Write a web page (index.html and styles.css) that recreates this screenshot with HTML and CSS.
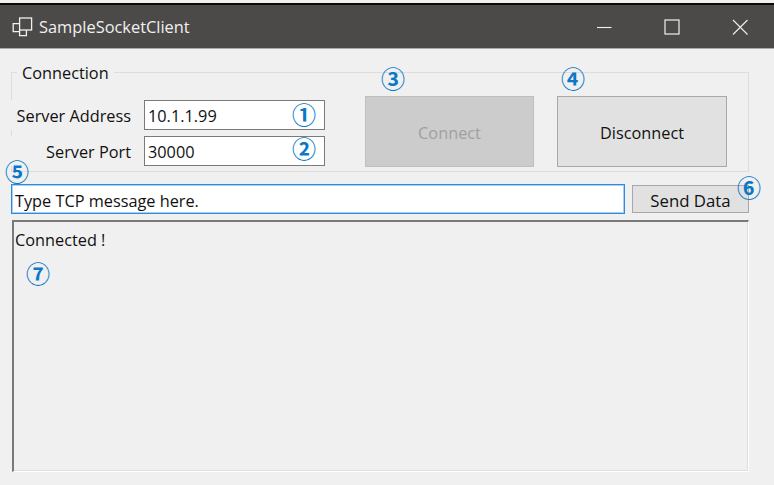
FILE: index.html
```html
<!doctype html>
<html lang="en">
<head>
  <meta charset="utf-8">
  <title>SampleSocketClient</title>
  <link rel="stylesheet" href="styles.css">
</head>
<body>
<div class="window">
  <div class="titlebar">
    <svg class="app-icon" width="21" height="20" viewBox="0 0 21 20" fill="none" stroke="#f0f0f0" stroke-width="1.3">
      <rect x="7.6" y="1" width="12" height="12"/>
      <path d="M7.6 6.600H1.200V14.600H7.600M7.600 13V18.600H14.400V13"/>
    </svg>
    <span class="title">SampleSocketClient</span>
    <div class="controls">
      <svg width="16" height="16" viewBox="0 0 16 16" stroke="#f0f0f0" stroke-width="1.1"><path d="M1 8.500H15.500"/></svg>
      <svg width="16" height="16" viewBox="0 0 16 16" fill="none" stroke="#f0f0f0" stroke-width="1.2"><rect x="1" y="1" width="14" height="14"/></svg>
      <svg width="16" height="16" viewBox="0 0 16 16" stroke="#f0f0f0" stroke-width="1.1"><path d="M1 1L15.500 15.500M15.500 1L1 15.500"/></svg>
    </div>
  </div>

  <div class="content">
    <fieldset class="connection">
      <legend>Connection</legend>
      <div class="conn-row">
        <div class="fields">
          <label>Server Address</label>
          <input class="field" type="text" value="10.1.1.99">
          <label>Server Port</label>
          <input class="field" type="text" value="30000">
        </div>
        <button class="btn btn-big btn-off">Connect</button>
        <button class="btn btn-big">Disconnect</button>
      </div>
    </fieldset>

    <div class="send-row">
      <input class="message" type="text" value="Type TCP message here.">
      <button class="btn btn-send">Send Data</button>
    </div>

    <div class="log">Connected !</div>
  </div>

  <!-- numbered callouts drawn over the screenshot -->
  <span class="mark mark1">①</span>
  <span class="mark mark2">②</span>
  <span class="mark mark3">③</span>
  <span class="mark mark4">④</span>
  <span class="mark mark5">⑤</span>
  <span class="mark mark6">⑥</span>
  <span class="mark mark7">⑦</span>
</div>
</body>
</html>
```

FILE: styles.css
```css
* {
    margin: 0;
    padding: 0;
    box-sizing: border-box;
}
body {
    background-color: #f0f0f0;
    font-family: "Open Sans", "Noto Sans", sans-serif;
    font-size: 16.3px;
    color: #111;
}
.window {
    position: relative;
    width: 774px;
    height: 485px;
    overflow: hidden;
    padding-top: 3px;
    background-color: #f0f0f0;
}
.titlebar {
    display: flex;
    align-items: center;
    height: 46px;
    padding-left: 12px;
    background-color: #4b4a48;
    border-top: 2px solid #0a0a0a;
    border-bottom: 1px solid #aaa;
    color: #f0f0f0;
}
.title {
    margin-left: 6px;
    font-size: 16.400px;
}
.controls {
    display: flex;
    gap: 52px;
    margin-left: auto;
    margin-right: 26px;
}
.content {
    padding: 11px 25px 0 11px;
}
.connection {
    height: 112px;
    border: 1px solid #dcdcdc;
    padding: 12px 0 0 0;
}
.connection legend {
    margin-left: 5px;
    padding: 2px 5px 0;
    line-height: 22px;
}
.conn-row {
    display: flex;
    align-items: flex-start;
}
.fields {
    display: grid;
    grid-template-columns: 122px 181px;
    column-gap: 13px;
    row-gap: 6px;
    margin-left: -3px;
    padding-top: 4px;
}
.fields label {
    height: 30px;
    line-height: 32px;
    text-align: right;
    background-color: #f0f0f0;
}
.field {
    height: 30px;
    padding: 2px 0 0 3px;
    border: 1px solid #7a7a7a;
    background-color: #fff;
    font: inherit;
    color: #111;
}
.btn {
    padding-top: 2px;
    border: 1px solid #a8a8a8;
    background-color: #e1e1e1;
    font: inherit;
    color: #111;
}
.btn-big {
    width: 170px;
    height: 71px;
    margin-left: 23px;
}
.btn-off {
    width: 169px;
    margin-left: 40px;
    border-color: #bfbfbf;
    background-color: #cccccc;
    color: #a0a0a0;
}
.send-row {
    display: flex;
    align-items: center;
    gap: 7px;
    margin-top: 12px;
}
.message {
    width: 614px;
    height: 30px;
    padding: 3px 0 0 3px;
    border: 1px solid #2f8ade;
    box-shadow: inset 0 0 0 1px #a5d0f0;
    background-color: #fff;
    font: inherit;
    color: #111;
}
.btn-send {
    width: 117px;
    height: 28px;
    padding-top: 3px;
    font-size: 16.800px;
}
.log {
    height: 252px;
    margin-top: 6px;
    margin-left: 1px;
    padding: 7px 0 0 1px;
    border-top: 2px solid #7a7a7a;
    border-left: 2px solid #7a7a7a;
    border-right: 1px solid #fff;
    border-bottom: 1px solid #fff;
    box-shadow: inset -1px -1px 0 #dedede;
}
.mark {
    position: absolute;
    width: 30px;
    text-align: center;
    font-family: "Noto Sans CJK JP", sans-serif;
    font-size: 24px;
    font-weight: 700;
    line-height: 30px;
    color: #0a78c8;
}
.mark1 { left: 289px; top: 99px; }
.mark2 { left: 289px; top: 133px; }
.mark3 { left: 378px; top: 63px; }
.mark4 { left: 558px; top: 63px; }
.mark5 { left: 2px; top: 156px; }
.mark6 { left: 734px; top: 172px; }
.mark7 { left: 23px; top: 258px; }
```
